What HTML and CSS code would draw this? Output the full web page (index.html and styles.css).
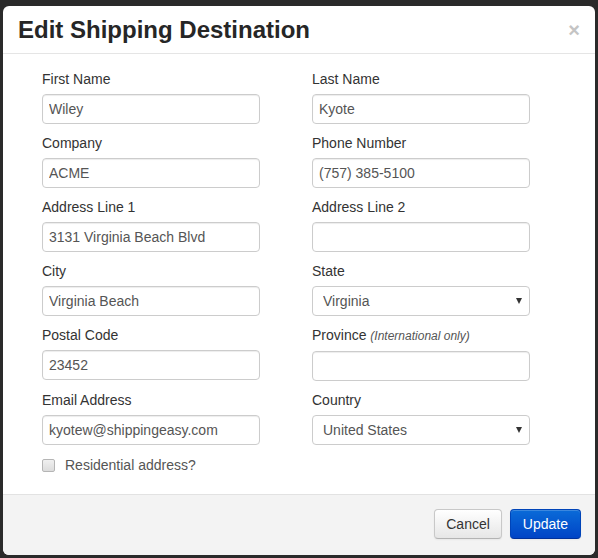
FILE: index.html
```html
<!DOCTYPE html>
<html>
<head>
<meta charset="utf-8">
<link rel="stylesheet" href="styles.css">
</head>
<body>
<div class="modal">
  <div class="modal-header">
    <h3 class="title">Edit Shipping Destination</h3>
    <span class="close">&times;</span>
  </div>
  <div class="modal-body">
    <div class="grid">
      <div class="field">
        <label>First Name</label>
        <input class="input" type="text" value="Wiley">
      </div>
      <div class="field">
        <label>Last Name</label>
        <input class="input" type="text" value="Kyote">
      </div>
      <div class="field">
        <label>Company</label>
        <input class="input" type="text" value="ACME">
      </div>
      <div class="field">
        <label>Phone Number</label>
        <input class="input" type="text" value="(757) 385-5100">
      </div>
      <div class="field">
        <label>Address Line 1</label>
        <input class="input" type="text" value="3131 Virginia Beach Blvd">
      </div>
      <div class="field">
        <label>Address Line 2</label>
        <input class="input" type="text" value="">
      </div>
      <div class="field">
        <label>City</label>
        <input class="input" type="text" value="Virginia Beach">
      </div>
      <div class="field">
        <label>State</label>
        <div class="select-wrap">
          <select class="input select"><option>Virginia</option></select>
          <span class="caret"></span>
        </div>
      </div>
      <div class="field">
        <label>Postal Code</label>
        <input class="input" type="text" value="23452">
      </div>
      <div class="field">
        <label>Province <em class="hint">(International only)</em></label>
        <input class="input" type="text" value="">
      </div>
      <div class="field">
        <label>Email Address</label>
        <input class="input" type="text" value="kyotew@shippingeasy.com">
      </div>
      <div class="field">
        <label>Country</label>
        <div class="select-wrap">
          <select class="input select"><option>United States</option></select>
          <span class="caret"></span>
        </div>
      </div>
    </div>
    <label class="check">
      <input type="checkbox" class="box">
      <span>Residential address?</span>
    </label>
  </div>
  <div class="modal-footer">
    <button class="btn btn-cancel">Cancel</button>
    <button class="btn btn-primary">Update</button>
  </div>
</div>
</body>
</html>
```
FILE: styles.css
```css
html, body {
  margin: 0;
  padding: 0;
  background: #2a2a2a;
  font-family: "Liberation Sans", Arial, sans-serif;
}
body {
  padding: 6px 3px 3px 3px;
  width: 598px;
  height: 558px;
  box-sizing: border-box;
}
.modal {
  width: 592px;
  height: 549px;
  background: #fff;
  border-radius: 6px;
  overflow: hidden;
  display: flex;
  flex-direction: column;
}
.modal-header {
  height: 47px;
  border-bottom: 1px solid #e5e5e5;
  display: flex;
  align-items: center;
  justify-content: space-between;
  padding: 0 15px;
  box-sizing: content-box;
  flex: none;
}
.title {
  margin: 0;
  font-size: 24px;
  font-weight: bold;
  color: #262626;
  line-height: 30px;
  padding-top: 1px;
}
.close {
  font-size: 20px;
  font-weight: bold;
  color: #c4c4c4;
  line-height: 20px;
  margin-right: 0;
}
.modal-body {
  flex: 1;
  padding: 15px 39px 0 39px;
}
.grid {
  display: grid;
  grid-template-columns: 218px 218px;
  column-gap: 52px;
  row-gap: 9px;
}
.field {
  display: flex;
  flex-direction: column;
}
.field label {
  font-size: 14px;
  line-height: 20px;
  color: #333;
  margin-bottom: 5px;
}
.hint {
  font-size: 12px;
  color: #555;
}
.input {
  box-sizing: border-box;
  width: 218px;
  height: 30px;
  border: 1px solid #cccccc;
  border-radius: 4px;
  box-shadow: inset 0 1px 1px rgba(0,0,0,0.075);
  padding: 4px 6px;
  font-family: "Liberation Sans", Arial, sans-serif;
  font-size: 14px;
  color: #555;
  background: #fff;
  margin: 0;
  outline: none;
}
.select-wrap {
  position: relative;
  width: 218px;
}
.select {
  -webkit-appearance: none;
  appearance: none;
  padding: 4px 10px;
  box-shadow: none;
}
.caret {
  position: absolute;
  right: 8px;
  top: 12px;
  width: 0;
  height: 0;
  border-left: 3.5px solid transparent;
  border-right: 3.5px solid transparent;
  border-top: 6px solid #333;
}
.check {
  display: flex;
  align-items: center;
  margin-top: 10px;
  height: 20px;
  font-size: 14px;
  color: #555;
}
.box {
  -webkit-appearance: none;
  appearance: none;
  width: 13px;
  height: 13px;
  margin: 0 10px 0 0;
  border: 1px solid #b5b5b5;
  border-radius: 2px;
  background: linear-gradient(#f0f0f0, #dcdcdc);
  box-sizing: border-box;
}
.modal-footer {
  height: 61px;
  background: #f3f3f3;
  border-top: 1px solid #e2e2e2;
  display: flex;
  justify-content: flex-end;
  align-items: flex-start;
  padding: 14px 14px 0 0;
  box-sizing: border-box;
  gap: 8px;
  flex: none;
}
.btn {
  height: 30px;
  padding: 4px 12px;
  font-family: "Liberation Sans", Arial, sans-serif;
  font-size: 14px;
  line-height: 20px;
  color: #333;
  background: linear-gradient(#ffffff, #e6e6e6);
  border: 1px solid #c8c8c8;
  border-bottom-color: #b3b3b3;
  border-radius: 4px;
  box-shadow: inset 0 1px 0 rgba(255,255,255,.2), 0 1px 2px rgba(0,0,0,.05);
  box-sizing: border-box;
}
.btn-cancel {
  padding: 4px 11px;
}
.btn-primary {
  color: #fff;
  background: linear-gradient(#0a6bd8, #0044c6);
  border-color: #0044b8 #0044b8 #00309a;
}
```
